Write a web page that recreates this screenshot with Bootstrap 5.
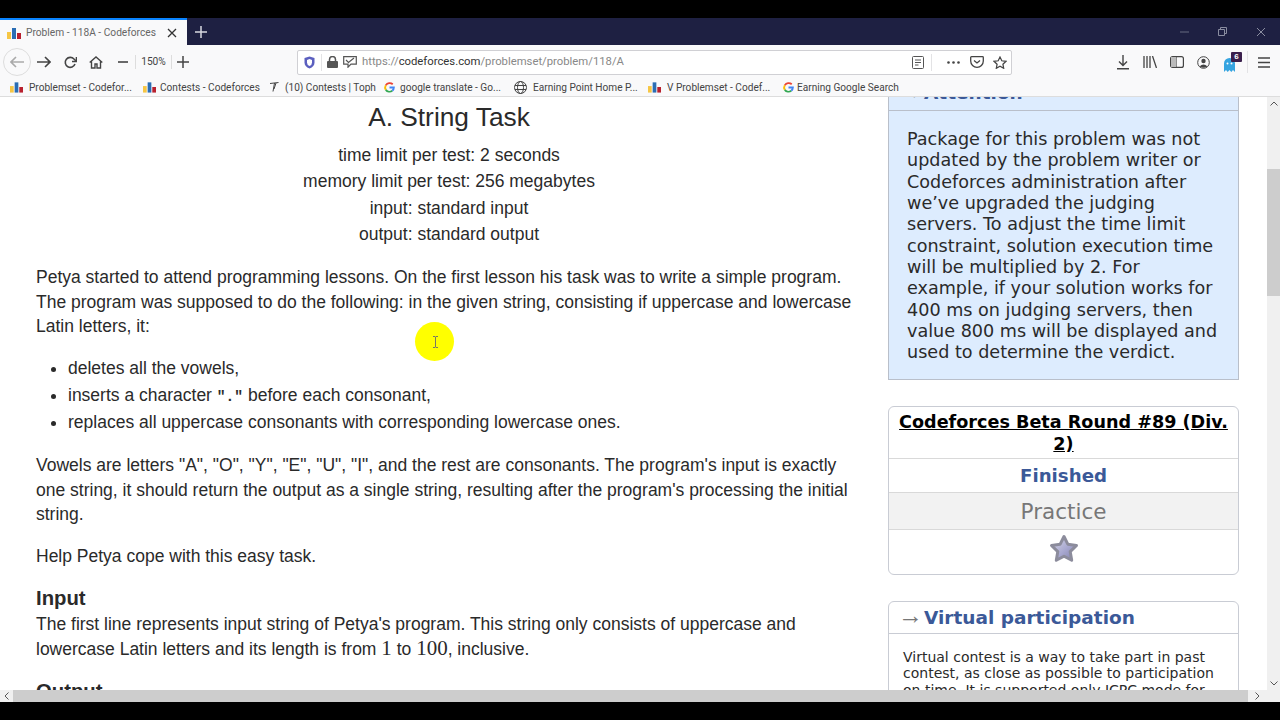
<!doctype html>
<html lang="en"><head><meta charset="utf-8">
<link rel="stylesheet" href="https://cdn.jsdelivr.net/npm/bootstrap@5.3.0/dist/css/bootstrap.min.css">
<style>
html,body{height:720px;overflow:hidden;background:#000;margin:0}
.shell{height:720px;font-family:"Liberation Sans",Arial,sans-serif;color:#222}
.blackbar{height:18px;background:#000;flex:none}
.tabbar{height:27px;background:#1e2042;flex:none}
.tabcur{width:187px;background:#f9f9fa;border-top:2px solid #0a84ff;padding:1px 10px 0 7px;font-size:10.2px;color:#666;font-family:Roboto,sans-serif}
.tabcur .tt{flex:1;margin-left:5px;white-space:nowrap}
.newtab{margin-left:8px}
.winbtns{margin-left:auto;gap:29px;padding-right:14px}
.toolbar{height:32px;background:#f9f9fa;flex:none;padding-left:3px;padding-top:2px}
.tbtn{width:26px;height:28px;display:flex;align-items:center;justify-content:center;flex:none}
.backcirc{border:1px solid #ddd;border-radius:50%;width:28px;height:28px}
.tminus{width:24px;margin-left:2px}
.tplus{width:22px}
.zoomv{font-size:10.2px;color:#444;width:37px;text-align:center;font-family:Roboto,sans-serif;border-left:1px solid #ddd;border-right:1px solid #ddd;line-height:14px}
.urlbar{width:715px;height:25px;margin-left:103px;margin-right:104px;background:#fff;border:1px solid #d0d0d4;border-radius:2px;font-size:11.3px;font-family:Roboto,sans-serif;color:#888;flex:none}
.urlbar b{font-weight:400;color:#333}
.shieldbox{width:23px}
.sep{width:1px;height:17px;background:#e3e3e5;flex:none}
.ulock{margin-left:5px}
.udlg{margin-left:5px}
.utext{margin-left:5px}
.usep2{margin-left:7px}
.udots{margin-left:15px}
.upock{margin-left:10px}
.ustar{margin-left:9px;margin-right:4px}
.rg{margin-left:13px}
.ghostw{margin-left:14px;width:18px;height:20px}
.ghostsvg{left:0;top:6px}
.badge6{left:7px;top:0;width:11px;height:10px;background:#3a1f4d;color:#fff;font-size:8px;font-weight:700;border-radius:1px}
.sep2{margin-left:5px;height:22px}
.rg2{margin-left:10px}
.bmbar{height:20px;background:#f9f9fa;border-bottom:1px solid #ddd;flex:none;font-size:10.1px;color:#444;font-family:Roboto,sans-serif;padding-left:10px;padding-top:2px;white-space:nowrap}
.bmi{display:flex;align-items:center;gap:6px;flex:none}
.b1{width:133px}.b2{width:127px;gap:4px}.b3{width:113px}.b4{width:131px;gap:4px}.b5{width:134px}.b6{width:134px}.b7{gap:2px}
.pagearea{height:593px;background:#fff;flex:none;overflow:hidden}
.pagecol{flex:1;overflow:hidden;min-width:0}
.pagescroll{margin-top:-14px}
.maincol{width:826px;margin-left:36px;flex:none;font-size:17.5px;line-height:24.4px;color:#2a2a2a}
.ttl{font-size:26.3px;line-height:30px;text-align:center;margin:19px 0 10px;color:#2a2a2a}
.lim{text-align:center;line-height:26.3px;margin-bottom:18px}
.maincol p{margin:0 0 18px}
.maincol ul{margin:-1px 0 18px;padding-left:32px}
.maincol li{line-height:26.6px}
.maincol code{font-family:"Liberation Mono",monospace;color:#2a2a2a;font-size:14.6px;font-weight:700;line-height:1}
.sec{font-size:20.3px;font-weight:700;line-height:24px;margin:-2px 0 2px;padding-top:1px}
.mth{font-family:"Liberation Serif",serif;font-size:21px;line-height:25.4px}
.sidecol{width:351px;margin-left:26px;flex:none;font-family:"DejaVu Sans",Verdana,sans-serif}
.sbox{border:1px solid #c9ccd4;border-radius:6px;margin-bottom:26px;overflow:hidden;background:#fff}
.atn{background:#ddecfe;border-radius:0;border-color:#b9bfca}
.sbhead{font-size:18.5px;font-weight:700;color:#3b5998;line-height:27px;height:32px;padding:1px 8px 0 9px;border-bottom:1px solid #c9ccd4;white-space:nowrap}
.sbhead .arr{font-weight:400;font-size:25px;line-height:1;color:#777;display:inline-block;width:26px;font-family:"Liberation Serif",serif}
.atn .sbhead{border-color:#b9bfca;padding:0 0 0 9px;height:27px;line-height:13px}
.atn .sbhead .arr{line-height:13px}
.atn .sbbody{padding:18px 20px 15px 18px;font-size:17.6px;line-height:21.35px;color:#2a2a2a}
.rnd{text-align:center}
.rnd>div{border-bottom:1px solid #d9d9d9}
.rnd>div:last-child{border-bottom:0}
.rtitle{font-size:17.6px;font-weight:700;line-height:22.5px;padding:4px 6px 2px}
.rtitle a{color:#000}
.rfin{font-size:18.2px;font-weight:700;color:#3b5998;height:34px;line-height:34px}
.rpra{font-size:21.5px;color:#777;background:#f2f2f2;height:37px;line-height:38px}
.rstar{height:44px;display:flex;align-items:flex-start;justify-content:center;padding-top:4px}
.vtext{padding:15px 14px 0;font-size:14px;line-height:16.7px;color:#2a2a2a}
.vscroll{width:13px;background:#f0f0f0;flex:none;height:593px}
.vthumb{height:127px;background:#cdcdcd;margin-top:59px}
.sarrow{height:13px;display:flex;align-items:center;justify-content:center;flex:none}
.hscroll{height:12px;background:#cdcdcd;flex:none}
.harr{width:13px;background:#f0f0f0;display:flex;align-items:center;justify-content:center;flex:none}
.harr2{width:19px}
.hthumb{flex:1;background:#cdcdcd}
.hcorner{width:13px;background:#f0f0f0;flex:none}
.cursorhi{position:absolute;left:415px;top:322px;width:39px;height:39px;border-radius:50%;background:#ffff00;display:flex;align-items:center;justify-content:center;padding-left:2px}
.blackbot{flex:1;background:#000}
.defsvg{position:absolute}
svg{display:block;flex:none}
</style></head><body>
<svg class="defsvg" width="0" height="0"><defs>
<g id="cfi"><rect x="0" y="5" width="4" height="7" fill="#f6c644"/><rect x="5" y="1" width="4" height="11" fill="#2a6db4"/><rect x="10" y="6" width="4" height="6" fill="#b8202e"/></g>
<g id="goo" fill="none" stroke-width="2"><path d="M10.5 3.5A5 5 0 0 0 3 4.5" stroke="#ea4335"/><path d="M3 4.5A5 5 0 0 0 3 9.5" stroke="#fbbc05"/><path d="M3 9.5A5 5 0 0 0 10 10.5" stroke="#34a853"/><path d="M10 10.5Q11.7 9 11.7 7H7" stroke="#4285f4"/></g>
</defs></svg>
<div class="shell d-flex flex-column position-relative">
<div class="blackbar"></div>
<div class="tabbar d-flex">
  <div class="tabcur d-flex align-items-center">
    <svg width="14" height="12" viewBox="0 0 14 12"><use href="#cfi"/></svg>
    <span class="tt">Problem - 118A - Codeforces</span>
    <svg width="10" height="10" viewBox="0 0 10 10"><path d="M1 1l8 8M9 1l-8 8" stroke="#333" stroke-width="1.3"/></svg>
  </div>
  <div class="d-flex align-items-center newtab"><svg width="12" height="12" viewBox="0 0 12 12"><path d="M6 0v12M0 6h12" stroke="#d8d8e0" stroke-width="1.5"/></svg></div>
  <div class="d-flex align-items-center winbtns">
    <svg width="9" height="2" viewBox="0 0 9 2"><path d="M0 1h9" stroke="#666a80"/></svg>
    <svg width="9" height="9" viewBox="0 0 9 9" fill="none" stroke="#8a8da0"><path d="M.5 2.5h6v6h-6zM2.5 2.5v-2h6v6h-2"/></svg>
    <svg width="10" height="10" viewBox="0 0 10 10"><path d="M1 1l8 8M9 1l-8 8" stroke="#8a8da0"/></svg>
  </div>
</div>
<div class="toolbar d-flex align-items-center">
  <div class="tbtn backcirc"><svg width="14" height="12" viewBox="0 0 14 12" fill="none" stroke="#aaa" stroke-width="1.6"><path d="M14 6H1M6 1L1 6l5 5"/></svg></div>
  <div class="tbtn"><svg width="14" height="12" viewBox="0 0 14 12" fill="none" stroke="#444" stroke-width="1.6"><path d="M0 6h13M8 1l5 5-5 5"/></svg></div>
  <div class="tbtn"><svg width="13" height="13" viewBox="0 0 13 13" fill="none" stroke="#444" stroke-width="1.6"><path d="M11 8a5 5 0 1 1-1-5l2 2"/><path d="M12.5 1v4.5H8"/></svg></div>
  <div class="tbtn"><svg width="14" height="13" viewBox="0 0 14 13" fill="none" stroke="#444" stroke-width="1.4"><path d="M.7 6.5L7 1l6.3 5.5M2.5 5.500V12H6V8h2v4h3.500V5.500"/></svg></div>
  <div class="tbtn tminus"><svg width="10" height="2" viewBox="0 0 10 2"><path d="M0 1h10" stroke="#444" stroke-width="1.6"/></svg></div>
  <div class="zoomv">150%</div>
  <div class="tbtn tplus"><svg width="12" height="12" viewBox="0 0 12 12"><path d="M6 0v12M0 6h12" stroke="#444" stroke-width="1.5"/></svg></div>
  <div class="urlbar d-flex align-items-center">
    <div class="d-flex align-items-center justify-content-center shieldbox"><svg width="11" height="13" viewBox="0 0 11 13"><path d="M5.5.5L10.500 2V6.500Q10.500 10.500 5.500 12.500 .5 10.500 .5 6.500V2z" fill="#5b5fbf"/><path d="M5.500 3L8 4v2.500Q8 9 5.500 10 3 9 3 6.500V4z" fill="#fff"/></svg></div>
    <span class="sep"></span>
    <svg class="ulock" width="11" height="12" viewBox="0 0 11 12"><rect y="5" width="11" height="7" rx="1" fill="#555"/><path d="M2.500 5.500V3.500a3 3 0 0 1 6 0v2" fill="none" stroke="#555" stroke-width="1.500"/></svg>
    <svg class="udlg" width="14" height="12" viewBox="0 0 14 12" fill="none" stroke="#555" stroke-width="1.200"><path d="M.7.700h12.600v7.500H8l-3 3v-3H.7z"/><path d="M3 4l2.500 2.500L11 2"/></svg>
    <span class="utext flex-grow-1"><span>https://</span><b>codeforces.com</b>/problemset/problem/118/A</span>
    <svg width="12" height="13" viewBox="0 0 12 13" fill="none" stroke="#555"><rect x=".5" y=".5" width="11" height="12" rx="1"/><path d="M3 4h6M3 6.500h6M3 9h3.500"/></svg>
    <span class="sep usep2"></span>
    <svg class="udots" width="13" height="3" viewBox="0 0 13 3"><circle cx="1.500" cy="1.500" r="1.300" fill="#444"/><circle cx="6.500" cy="1.500" r="1.300" fill="#444"/><circle cx="11.500" cy="1.500" r="1.300" fill="#444"/></svg>
    <svg class="upock" width="14" height="12" viewBox="0 0 14 12" fill="none" stroke="#444" stroke-width="1.300"><path d="M1.500.7h11q.8 0 .8.800v3.500a6.300 6.300 0 0 1-12.600 0V1.500q0-.8.800-.8z"/><path d="M4 4.500l3 2.500 3-2.500"/></svg>
    <svg class="ustar" width="14" height="13" viewBox="0 0 14 13" fill="none" stroke="#444" stroke-width="1.200"><path d="M7 1l1.800 3.800 4.200.5-3.100 2.900.8 4.100L7 10.300 3.300 12.300l.8-4.100L1 5.300l4.200-.5z"/></svg>
  </div>
  <svg width="14" height="15" viewBox="0 0 14 15" fill="none" stroke="#444" stroke-width="1.400"><path d="M7 0v10M3 6.500L7 10.500l4-4M1 13.800h12"/></svg>
  <svg class="rg" width="14" height="12" viewBox="0 0 14 12" fill="none" stroke="#444" stroke-width="1.300"><path d="M1 0v12M4 0v12M7 0v12M9.500 0l4 12"/></svg>
  <svg class="rg" width="14" height="12" viewBox="0 0 14 12" fill="none" stroke="#444" stroke-width="1.200"><rect x=".6" y=".6" width="12.800" height="10.800" rx="2"/><path d="M6 .6v10.800"/><rect x="1" y="1" width="5" height="10" fill="#bbb" stroke="none"/></svg>
  <svg class="rg" width="13" height="13" viewBox="0 0 13 13"><circle cx="6.500" cy="6.500" r="5.800" fill="none" stroke="#444"/><circle cx="6.500" cy="5" r="2.200" fill="#444"/><path d="M2.500 10.500Q6.500 6.500 10.500 10.500 6.500 12.800 2.500 10.500z" fill="#444"/></svg>
  <div class="position-relative ghostw"><svg class="position-absolute ghostsvg" width="11" height="14" viewBox="0 0 11 14"><path d="M0 14V5.500a5.500 5.500 0 0 1 11 0V14l-2-2-1.700 2-1.800-2-1.800 2L2 12z" fill="#35a4e0"/><circle cx="3.500" cy="5.500" r="1" fill="#fff"/><circle cx="7.500" cy="5.500" r="1" fill="#fff"/></svg><span class="position-absolute d-flex align-items-center justify-content-center badge6">6</span></div>
  <span class="sep sep2"></span>
  <svg class="rg2" width="12" height="11" viewBox="0 0 12 11"><path d="M0 1h12M0 5.500h12M0 10h12" stroke="#444" stroke-width="1.500"/></svg>
</div>
<div class="bmbar d-flex align-items-center">
  <div class="bmi b1"><svg width="13" height="12" viewBox="0 0 14 12"><use href="#cfi"/></svg>Problemset - Codefor...</div>
  <div class="bmi b2"><svg width="13" height="12" viewBox="0 0 14 12"><use href="#cfi"/></svg>Contests - Codeforces</div>
  <div class="bmi b3"><svg width="9" height="10" viewBox="0 0 9 10" fill="none" stroke="#444"><path d="M0 1.500L8.500.5M4.500 1L3 9.500M6 1L4 7"/></svg>(10) Contests | Toph</div>
  <div class="bmi b4"><svg width="13" height="13" viewBox="0 0 14 14"><use href="#goo"/></svg>google translate - Go...</div>
  <div class="bmi b5"><svg width="13" height="13" viewBox="0 0 13 13" fill="none" stroke="#444"><circle cx="6.500" cy="6.500" r="6"/><ellipse cx="6.500" cy="6.500" rx="3" ry="6"/><path d="M1 4.500h11M1 8.500h11"/></svg>Earning Point Home P...</div>
  <div class="bmi b6"><svg width="13" height="12" viewBox="0 0 14 12"><use href="#cfi"/></svg>V Problemset - Codef...</div>
  <div class="bmi b7"><svg width="13" height="13" viewBox="0 0 14 14"><use href="#goo"/></svg>Earning Google Search</div>
</div>
<div class="pagearea d-flex">
  <div class="pagecol">
    <div class="pagescroll d-flex">
      <div class="maincol">
        <div class="ttl">A. String Task</div>
        <div class="lim">
          <div>time limit per test: 2 seconds</div>
          <div>memory limit per test: 256 megabytes</div>
          <div>input: standard input</div>
          <div>output: standard output</div>
        </div>
        <p>Petya started to attend programming lessons. On the first lesson his task was to write a simple program. The program was supposed to do the following: in the given string, consisting if uppercase and lowercase Latin letters, it:</p>
        <ul>
          <li>deletes all the vowels,</li>
          <li>inserts a character <code>"."</code> before each consonant,</li>
          <li>replaces all uppercase consonants with corresponding lowercase ones.</li>
        </ul>
        <p>Vowels are letters "A", "O", "Y", "E", "U", "I", and the rest are consonants. The program's input is exactly one string, it should return the output as a single string, resulting after the program's processing the initial string.</p>
        <p>Help Petya cope with this easy task.</p>
        <div class="sec">Input</div>
        <p>The first line represents input string of Petya's program. This string only consists of uppercase and lowercase Latin letters and its length is from <span class="mth">1</span> to <span class="mth">100</span>, inclusive.</p>
        <div class="sec">Output</div>
      </div>
      <div class="sidecol">
        <div class="sbox atn">
          <div class="sbhead"><span class="arr">→</span>Attention</div>
          <div class="sbbody">Package for this problem was not updated by the problem writer or Codeforces administration after we’ve upgraded the judging servers. To adjust the time limit constraint, solution execution time will be multiplied by 2. For example, if your solution works for 400 ms on judging servers, then value 800 ms will be displayed and used to determine the verdict.</div>
        </div>
        <div class="sbox rnd">
          <div class="rtitle"><a href="#">Codeforces Beta Round #89 (Div. 2)</a></div>
          <div class="rfin">Finished</div>
          <div class="rpra">Practice</div>
          <div class="rstar"><svg width="30" height="30" viewBox="0 0 30 30"><defs><linearGradient id="sg" x1="0" y1="0" x2="1" y2="1"><stop offset="0" stop-color="#dcdce8"/><stop offset=".55" stop-color="#a8a8d0"/><stop offset="1" stop-color="#7f7fa8"/></linearGradient></defs><path d="M15 2.500l3.800 7.700 8.700 1.300-6.300 6.100 1.500 8.700L15 22.200l-7.700 4.100 1.500-8.700-6.300-6.100 8.700-1.300z" fill="url(#sg)" stroke="#8c8c9c" stroke-width="3" stroke-linejoin="round"/></svg></div>
        </div>
        <div class="sbox">
          <div class="sbhead"><span class="arr">→</span>Virtual participation</div>
          <div class="vtext">Virtual contest is a way to take part in past contest, as close as possible to participation on time. It is supported only ICPC mode for virtual contests.</div>
        </div>
      </div>
    </div>
  </div>
  <div class="vscroll d-flex flex-column">
    <div class="sarrow"><svg width="8" height="5" viewBox="0 0 8 5" fill="none" stroke="#555"><path d="M.5 4.500L4 1l3.500 3.500"/></svg></div>
    <div class="vthumb"></div>
    <div class="sarrow mt-auto"><svg width="8" height="5" viewBox="0 0 8 5" fill="none" stroke="#555"><path d="M.5.500L4 4l3.500-3.500"/></svg></div>
  </div>
</div>
<div class="hscroll d-flex">
  <div class="harr"><svg width="5" height="8" viewBox="0 0 5 8" fill="none" stroke="#555"><path d="M4.500.5L1 4l3.500 3.500"/></svg></div>
  <div class="hthumb"></div>
  <div class="harr harr2"><svg width="5" height="8" viewBox="0 0 5 8" fill="none" stroke="#555"><path d="M.5.500L4 4 .5 7.500"/></svg></div>
  <div class="hcorner"></div>
</div>
<div class="blackbot"></div>
<div class="cursorhi"><svg width="7" height="12" viewBox="0 0 7 12" fill="none" stroke="#776"><path d="M1 .5h2l.5.5.5-.5h2M3.500 1v10M1 11.500h2l.5-.5.5.5h2"/></svg></div>
</div>
</body></html>
